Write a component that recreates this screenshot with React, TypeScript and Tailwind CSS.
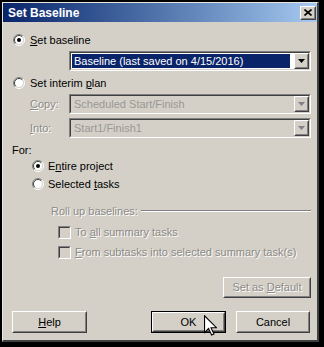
import React from "react";

const Radio = ({ checked }: { checked?: boolean }) => (
  <svg width="12" height="12" viewBox="0 0 12 12" className="shrink-0">
    <circle cx="6" cy="6" r="5" fill="#fff" />
    <path d="M2.1 9.9 A5.5 5.5 0 0 1 9.9 2.1" stroke="#808080" strokeWidth="1" fill="none" />
    <path d="M9.9 2.1 A5.5 5.5 0 0 1 2.1 9.9" stroke="#ffffff" strokeWidth="1" fill="none" />
    <path d="M2.8 9.2 A4.5 4.5 0 0 1 9.2 2.8" stroke="#404040" strokeWidth="1" fill="none" />
    <path d="M9.2 2.8 A4.5 4.5 0 0 1 2.8 9.2" stroke="#d4d0c8" strokeWidth="1" fill="none" />
    {checked && <circle cx="6" cy="6" r="2" fill="#000" />}
  </svg>
);

const Check = () => (
  <div className="w-[13px] h-[13px] shrink-0 border border-t-[#808080] border-l-[#808080] border-b-white border-r-white">
    <div className="w-full h-full bg-[#d4d0c8] border border-t-[#404040] border-l-[#404040] border-b-[#d4d0c8] border-r-[#d4d0c8]" />
  </div>
);

const Raised = ({
  children,
  className = "",
  inner = "",
}: {
  children?: React.ReactNode;
  className?: string;
  inner?: string;
}) => (
  <div className={`border border-t-white border-l-white border-b-[#404040] border-r-[#404040] bg-[#d4d0c8] ${className}`}>
    <div className={`w-full h-full border border-t-[#d4d0c8] border-l-[#d4d0c8] border-b-[#808080] border-r-[#808080] flex items-center justify-center ${inner}`}>
      {children}
    </div>
  </div>
);

const Arrow = ({ disabled }: { disabled?: boolean }) => (
  <svg width="7" height="4" viewBox="0 0 7 4">
    <path d="M0 0 H7 L3.5 4 Z" fill={disabled ? "#808080" : "#000"} />
  </svg>
);

const Combo = ({
  text,
  selected,
  disabled,
}: {
  text: string;
  selected?: boolean;
  disabled?: boolean;
}) => (
  <div className="w-[242px] h-[20px] border border-t-[#808080] border-l-[#808080] border-b-white border-r-white">
    <div
      className={`w-full h-full flex border border-t-[#404040] border-l-[#404040] border-b-[#d4d0c8] border-r-[#d4d0c8] ${
        disabled ? "bg-[#d4d0c8]" : "bg-white"
      }`}
    >
      {selected ? (
        <div className="flex-1 my-[1px] ml-[1px] mr-[4px] bg-[#0a246a] text-white flex items-center pl-[2px] leading-none">
          {text}
        </div>
      ) : (
        <div className="flex-1 flex items-center pl-[3px] leading-none text-[#9a9893]">{text}</div>
      )}
      <Raised className="w-[15px] h-full">
        <Arrow disabled={disabled} />
      </Raised>
    </div>
  </div>
);

const dis = "text-[#8c8a85] [text-shadow:1px_1px_0_#ffffff]";

export default function App() {
  return (
    <div className="w-[324px] h-[347px] bg-black pl-[2px] pt-[2px] font-['Liberation_Sans',Arial,sans-serif] text-[11px] text-black relative">
      <div className="w-[317px] h-[340px] bg-[#d4d0c8] border-l border-t border-l-[#e8e6e0] border-t-[#e8e6e0] border-r-2 border-b-2 border-r-[#404040] border-b-[#404040] flex flex-col">
        {/* Title bar */}
        <div className="h-[19px] shrink-0 bg-linear-to-r from-[#0a246a] to-[#a6caf0] flex items-center justify-between pl-[5px] pr-[1px]">
          <span className="text-white font-bold text-[12px] leading-none">Set Baseline</span>
          <Raised className="w-[16px] h-[14px]">
            <svg width="8" height="7" viewBox="0 0 8 7">
              <path d="M0.5 0.5 L7.5 6.5 M7.5 0.5 L0.5 6.5" stroke="#000" strokeWidth="1.6" />
            </svg>
          </Raised>
        </div>

        {/* Body */}
        <div className="flex flex-col pl-[10px]">
          <div className="mt-[11px] h-[14px] flex items-center gap-[5px]">
            <Radio checked />
            <span className="leading-none">
              <u>S</u>et baseline
            </span>
          </div>

          <div className="mt-[4px] ml-[56px]">
            <Combo text="Baseline (last saved on 4/15/2016)" selected />
          </div>

          <div className="mt-[5px] h-[14px] flex items-center gap-[5px]">
            <Radio />
            <span className="leading-none">
              Set interim <u>p</u>lan
            </span>
          </div>

          <div className="mt-[4px] ml-[17px] flex items-center">
            <span className={`w-[39px] leading-none ${dis}`}>
              <u>C</u>opy:
            </span>
            <Combo text="Scheduled Start/Finish" disabled />
          </div>

          <div className="mt-[4px] ml-[17px] flex items-center">
            <span className={`w-[39px] leading-none ${dis}`}>
              <u>I</u>nto:
            </span>
            <Combo text="Start1/Finish1" disabled />
          </div>

          <div className="mt-[5px] h-[14px] flex items-center -ml-[1px]">
            <span className="leading-none">For:</span>
          </div>

          <div className="mt-[2px] h-[14px] flex items-center gap-[4px] ml-[19px]">
            <Radio checked />
            <span className="leading-none">
              E<u>n</u>tire project
            </span>
          </div>

          <div className="mt-[4px] h-[14px] flex items-center gap-[4px] ml-[19px]">
            <Radio />
            <span className="leading-none">
              Selected <u>t</u>asks
            </span>
          </div>

          <div className="mt-[13px] h-[14px] flex items-center ml-[38px] w-[260px]">
            <span className={`leading-none ${dis}`}>Roll up baselines:</span>
            <div className="flex-1 ml-[3px] h-[2px] border-t border-t-[#808080] border-b border-b-white" />
          </div>

          <div className="mt-[7px] h-[14px] flex items-center gap-[4px] ml-[45px]">
            <Check />
            <span className={`leading-none ${dis}`}>
              To <u>a</u>ll summary tasks
            </span>
          </div>

          <div className="mt-[6px] h-[14px] flex items-center gap-[4px] ml-[45px]">
            <Check />
            <span className={`leading-none ${dis}`}>
              <u>F</u>rom subtasks into selected summary task(s)
            </span>
          </div>

          <div className="mt-[18px] flex justify-end pr-[6px]">
            <Raised className="w-[88px] h-[21px]">
              <span className={`leading-none ${dis}`}>
                Set as <u>D</u>efault
              </span>
            </Raised>
          </div>

          <div className="mt-[13px] flex items-center -ml-[1px] pr-[7px]">
            <Raised className="w-[75px] h-[22px]">
              <span className="leading-none">
                <u>H</u>elp
              </span>
            </Raised>
            <div className="flex-1" />
            <div className="border border-black">
              <Raised className="w-[73px] h-[20px]">
                <span className="leading-none">OK</span>
              </Raised>
            </div>
            <Raised className="w-[74px] h-[22px] ml-[10px]">
              <span className="leading-none">Cancel</span>
            </Raised>
          </div>
        </div>
      </div>

      {/* Mouse cursor */}
      <svg
        className="absolute left-[204px] top-[315px]"
        width="13"
        height="21"
        viewBox="0 0 12 19"
      >
        <path
          d="M0.5 0.5 L0.5 16 L4.2 12.3 L7 18.3 L9.2 17.3 L6.5 11.5 L11.5 11.5 Z"
          fill="#fff"
          stroke="#000"
          strokeWidth="1"
          strokeLinejoin="miter"
        />
      </svg>
    </div>
  );
}
